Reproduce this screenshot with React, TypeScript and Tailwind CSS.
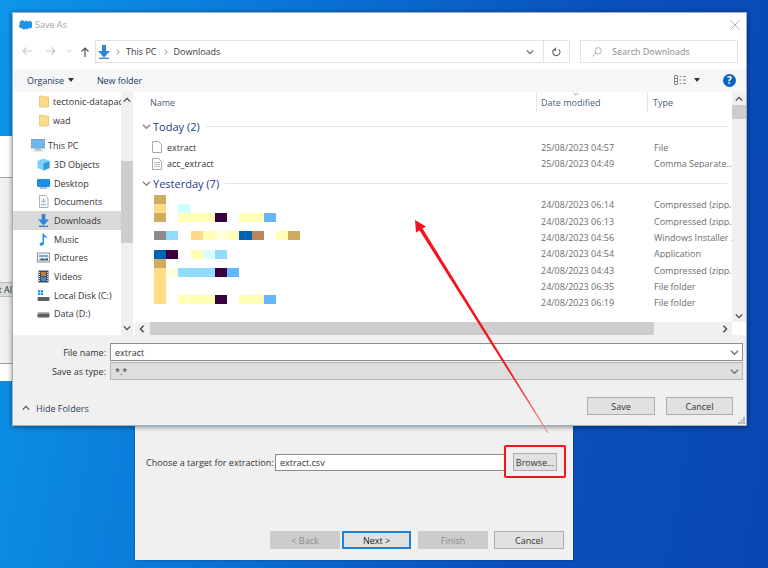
import React from "react";

const ink = "#3a3a3a";

function Chevron({ dir = "down", className = "" }: { dir?: "down" | "up" | "left" | "right"; className?: string }) {
  const d = { down: "M1 3l4 4 4-4", up: "M1 7l4-4 4 4", left: "M7 1L3 5l4 4", right: "M3 1l4 4-4 4" }[dir];
  return (
    <svg viewBox="0 0 10 10" className={className} fill="none" stroke="currentColor" strokeWidth="1.6">
      <path d={d} />
    </svg>
  );
}

function DownArrow({ className = "" }: { className?: string }) {
  return (
    <svg viewBox="0 0 12 14" className={className}>
      <path d="M4 0h4v6h4l-6 6.5L0 6h4z" fill="#2f86d8" />
      <rect x="1" y="12.6" width="10" height="1.2" fill="#1c6fc0" />
    </svg>
  );
}

function NavIcon({ name }: { name: string }) {
  const c = "w-[13px] h-[13px] shrink-0";
  switch (name) {
    case "folder":
      return (
        <svg viewBox="0 0 12 14" className="w-[10px] h-[13px] shrink-0">
          <path d="M0.5 0.5h4l1 1h6v12h-11z" fill="#fbdc8b" stroke="#e5c06a" />
        </svg>
      );
    case "pc":
      return (
        <svg viewBox="0 0 14 13" className="w-[14px] h-[13px] shrink-0">
          <rect x="0.5" y="0.5" width="13" height="8.5" fill="#6cb8ef" stroke="#8aa4b8" />
          <path d="M4 9.5h6v1.5H4z" fill="#a7b4bd" />
          <path d="M2 11.2h10v1.2H2z" fill="#c5ced4" />
        </svg>
      );
    case "cube":
      return (
        <svg viewBox="0 0 13 13" className={c}>
          <path d="M6.5 0.5l6 2.5v7l-6 2.5-6-2.5V3z" fill="#7fd0f5" />
          <path d="M6.5 5.5l6-2.5v7l-6 2.5z" fill="#2b9be0" />
        </svg>
      );
    case "desktop":
      return (
        <svg viewBox="0 0 13 11" className={c}>
          <rect x="0" y="1" width="13" height="8" rx="1" fill="#1e8fe8" />
          <rect x="3" y="9.5" width="7" height="1" fill="#7b8a94" />
        </svg>
      );
    case "docs":
      return (
        <svg viewBox="0 0 11 13" className={c}>
          <path d="M1.5 0.5h6l2.5 2.5v9.5h-8.5z" fill="#f6f8fa" stroke="#a9b2b9" />
          <path d="M5.5 3v4M3.5 5.5l2 2 2-2M3 9.5h5" stroke="#7fb4dc" fill="none" />
        </svg>
      );
    case "down":
      return <DownArrow className="w-[13px] h-[13px] shrink-0" />;
    case "music":
      return (
        <svg viewBox="0 0 10 13" className={c}>
          <path d="M4 0.5h1.3c.3 2 3.5 2.5 3.5 5.5-.8-1.4-2-1.8-3.4-2V10.5c0 1.3-1.3 2.2-2.8 2.2S1 11.8 1.4 10.8C1.8 9.8 3 9.4 4 9.7z" fill="#1a8fe6" />
        </svg>
      );
    case "pics":
      return (
        <svg viewBox="0 0 13 11" className={c}>
          <rect x="0.5" y="1" width="12" height="9" fill="#eef2f5" stroke="#8b97a1" />
          <rect x="2" y="3" width="9" height="2" fill="#7fa8c8" />
          <path d="M2 8l3-2 2 1 4-1v2.5H2z" fill="#4f5f6c" />
        </svg>
      );
    case "vids":
      return (
        <svg viewBox="0 0 11 13" className={c}>
          <rect x="0.5" y="0.5" width="10" height="12" fill="#3f4d66" />
          <rect x="3" y="2" width="5" height="4" fill="#c7803a" />
          <rect x="3" y="7" width="5" height="4" fill="#4a86c0" />
          <path d="M1.5 2v9M9.5 2v9" stroke="#d5dde3" strokeDasharray="1 1" />
        </svg>
      );
    case "c":
      return (
        <svg viewBox="0 0 13 13" className={c}>
          <path d="M1 1h2.2v2.2H1zM3.8 1H6v2.2H3.8zM1 3.8h2.2V6H1zM3.8 3.8H6V6H3.8z" fill="#1f9be8" />
          <rect x="0.5" y="8" width="12" height="4" rx="1" fill="#5c5f63" />
        </svg>
      );
    default:
      return (
        <svg viewBox="0 0 13 13" className={c}>
          <rect x="0.5" y="5" width="12" height="1.5" fill="#b5b9bc" />
          <rect x="0.5" y="6.5" width="12" height="4" rx="1" fill="#5c5f63" />
        </svg>
      );
  }
}

const navTop = [
  { n: "tectonic-datapac", i: "folder" },
  { n: "wad", i: "folder" },
];
const navPc = [
  { n: "3D Objects", i: "cube" },
  { n: "Desktop", i: "desktop" },
  { n: "Documents", i: "docs" },
  { n: "Downloads", i: "down" },
  { n: "Music", i: "music" },
  { n: "Pictures", i: "pics" },
  { n: "Videos", i: "vids" },
  { n: "Local Disk (C:)", i: "c" },
  { n: "Data (D:)", i: "d" },
];

function FileRow({ name, date, type, icon }: { name?: string; date: string; type: string; icon?: "blank" | "csv" }) {
  return (
    <div className="flex h-[16.35px] items-center whitespace-nowrap overflow-hidden">
      <div className="w-[406px] shrink-0 pl-[17px] flex items-center gap-[5px]">
        {icon && (
          <svg viewBox="0 0 10 12" className="w-[10px] h-[12px] shrink-0">
            <path d="M0.5 0.5h6l3 3v8h-9z" fill="#fff" stroke="#a8a8a8" />
            {icon === "csv" && <path d="M2 4.5h6M2 6.5h6M2 8.5h6" stroke="#bdbdbd" />}
          </svg>
        )}
        {name && <span className="text-[#333]">{name}</span>}
      </div>
      <div className="w-[113px] shrink-0 text-[#6d6d6d]">{date}</div>
      <div className="w-[79px] shrink-0 text-[#6d6d6d] overflow-hidden">{type}</div>
    </div>
  );
}

function GroupHeader({ label }: { label: string }) {
  return (
    <div className="flex h-[18px] items-center pl-[7px] pr-[5px]">
      <Chevron className="w-[9px] h-[9px] text-[#8a8a8a] shrink-0" />
      <span className="ml-[2px] text-[11px] text-[#1e3a8a] whitespace-nowrap">{label}</span>
      <div className="ml-[6px] h-px bg-[#e2e5ea] flex-1" />
    </div>
  );
}

const T = "bg-[#d0ab62]", Y = "bg-[#fedd85]", L = "bg-[#ffffb6]", D = "bg-[#3a0040]", B = "bg-[#66b6ff]", S = "bg-[#90dbff]";
const C = "bg-[#ccffff]", P = "bg-[#ffffdb]", N = "bg-[#0063b1]", R = "bg-[#b8865a]", G = "bg-[#8f8a90]", O = "bg-[#fdd98c]", Q = "bg-[#dbffff]";
const _ = "";
const mosaic: string[][] = [
  [T],
  [Y, _, C],
  [T, _, L, L, L, D, _, L, L, B],
  [_],
  [G, S, _, O, L, P, L, N, R, _, L, T],
  [_],
  [N, D, _, L, Q, S],
  [T],
  [Y, P, S, S, S, D, B],
  [Y],
  [Y],
  [Y, _, L, L, L, D, _, L, L, B],
];

function Btn({ children, className = "", tone = "normal" }: { children: React.ReactNode; className?: string; tone?: "normal" | "off" | "focus" }) {
  const look = {
    normal: "border border-[#adadad] bg-[#e1e1e1] text-[#333]",
    off: "border border-[#cccccc] bg-[#cccccc] text-[#8a8a8a]",
    focus: "border-2 border-[#1d7fd6] bg-[#e1e1e1] text-[#222]",
  }[tone];
  return <div className={`h-[18px] flex items-center justify-center ${look} ${className}`}>{children}</div>;
}

export default function App() {
  return (
    <div
      className="relative w-[768px] h-[568px] overflow-hidden bg-[linear-gradient(100deg,#0c96ea_0%,#0a78d8_30%,#0a50bc_70%,#0847b4_100%)] text-[9px] leading-none"
      style={{ fontFamily: '"Open Sans", "Noto Sans", sans-serif', color: ink }}
    >
      {/* Window behind on the left */}
      <div className="absolute left-0 top-[136px] w-[12px] h-[245px] bg-[#f0f0f0] flex flex-col overflow-hidden">
        <div className="h-[42px] bg-white border-b border-[#a0a0a0] shrink-0" />
        <div className="h-[104px] shrink-0" />
        <div className="h-[15px] bg-[#dcdcdc] border-y border-[#bbb] shrink-0 flex items-center justify-end text-[#333] whitespace-nowrap">t Al</div>
        <div className="h-[66px] shrink-0" />
        <div className="flex-1 bg-white border-t border-[#a0a0a0]" />
      </div>

      {/* Wizard window behind */}
      <div className="absolute left-[135px] top-[400px] w-[438px] h-[160px] bg-[#f0f0f0] shadow-[0_0_2px_rgba(0,0,0,0.4)] flex flex-col pt-[53px] px-[11px] text-[#333]">
        <div className="flex items-center h-[18px]">
          <span className="w-[129px] shrink-0 whitespace-nowrap">Choose a target for extraction:</span>
          <div className="w-[230px] h-[17px] border border-[#8a8a8a] bg-white flex items-center pl-[4px]">extract.csv</div>
          <Btn className="ml-[8px] w-[44px]">Browse...</Btn>
        </div>
        <div className="mt-[60px] flex justify-end">
          <Btn tone="off" className="w-[70px]">&lt; Back</Btn>
          <Btn tone="focus" className="ml-[2px] w-[69px]">Next &gt;</Btn>
          <Btn tone="off" className="ml-[7px] w-[70px]">Finish</Btn>
          <Btn className="ml-[6px] w-[70px] -mr-[2px]">Cancel</Btn>
        </div>
      </div>

      {/* Save As dialog */}
      <div className="absolute left-[12px] top-[12px] w-[735px] h-[414px] bg-white border border-[#9fb0bf] shadow-[0_1px_5px_rgba(0,0,0,0.45)] flex flex-col">
        {/* Title */}
        <div className="h-[25px] shrink-0 flex items-center pl-[6px] pr-[5px] pb-[2px]">
          <svg viewBox="0 0 14 10" className="w-[13px] h-[10px]">
            <path d="M5.8 1.5A2.5 2.5 0 0 1 9.6 1.2 2.9 2.9 0 0 1 13.9 4.8 2.6 2.6 0 0 1 10.3 8.3 2.2 2.2 0 0 1 7 9 2.5 2.5 0 0 1 3 8.5 2.4 2.4 0 0 1 1 4.2 2.7 2.7 0 0 1 5.8 1.5Z" fill="#1b96e8" />
          </svg>
          <span className="ml-[3px] text-[#a5a5a5]">Save As</span>
          <svg viewBox="0 0 10 10" className="ml-auto w-[10px] h-[10px] mr-[1px]" stroke="#a8a8a8" fill="none" strokeWidth="0.9">
            <path d="M0.5 0.5l9 9M9.5 0.5l-9 9" />
          </svg>
        </div>

        {/* Address row */}
        <div className="h-[31px] shrink-0 flex items-start pt-[2px] pl-[9px]">
          <svg viewBox="0 0 10 10" className="w-[10px] h-[10px] mt-[6px] text-[#c8c8c8]" fill="none" stroke="currentColor" strokeWidth="1.1">
            <path d="M10 5H1M4.5 1.5L1 5l3.5 3.5" />
          </svg>
          <svg viewBox="0 0 10 10" className="w-[10px] h-[10px] mt-[6px] ml-[14px] text-[#c8c8c8]" fill="none" stroke="currentColor" strokeWidth="1.1">
            <path d="M0 5h9M5.5 1.5L9 5 5.5 8.5" />
          </svg>
          <Chevron className="w-[6px] h-[6px] mt-[8px] ml-[10px] text-[#c8c8c8]" />
          <svg viewBox="0 0 10 10" className="w-[10px] h-[10px] mt-[7px] ml-[8px] text-[#555]" fill="none" stroke="currentColor" strokeWidth="1.2">
            <path d="M5 10V1M1.5 4.5L5 1l3.5 3.5" />
          </svg>
          <div className="ml-[5px] w-[475px] h-[23px] border-[1.5px] border-[#e3e3e3] flex items-center">
            <DownArrow className="ml-[2px] w-[12px] h-[14px]" />
            <Chevron dir="right" className="ml-[5px] w-[6px] h-[6px] text-[#888]" />
            <span className="ml-[5px]">This PC</span>
            <Chevron dir="right" className="ml-[7px] w-[6px] h-[6px] text-[#888]" />
            <span className="ml-[4px]">Downloads</span>
            <Chevron className="ml-auto mr-[9px] w-[8px] h-[8px] text-[#666]" />
            <div className="w-px h-full bg-[#e3e3e3]" />
            <svg viewBox="0 0 10 10" className="mx-[8px] w-[9px] h-[10px] text-[#666]" fill="none" stroke="currentColor" strokeWidth="1.2">
              <path d="M3 1.5A4 4 0 1 0 7.5 2M4 0v3H1" />
            </svg>
          </div>
          <div className="ml-[10px] w-[158px] h-[23px] border-[1.5px] border-[#e3e3e3] flex items-center pl-[11px] text-[#8a8a8a]">
            <svg viewBox="0 0 10 10" className="w-[10px] h-[10px]" fill="none" stroke="#a8a8a8" strokeWidth="0.9">
              <circle cx="6.2" cy="3.8" r="3.2" />
              <path d="M3.8 6L0.5 9.5" />
            </svg>
            <span className="ml-[10px]">Search Downloads</span>
          </div>
        </div>

        {/* Toolbar */}
        <div className="h-[23px] shrink-0 bg-[#f5f6f7] flex items-center pl-[14px] pr-[10px] pb-[1px] text-[#1f3a5a]">
          <span className="tracking-[-0.1px]">Organise</span>
          <svg viewBox="0 0 6 4" className="ml-[4px] w-[6px] h-[4px]"><path d="M0 0h6L3 4z" fill="#333" /></svg>
          <span className="ml-[23px] tracking-[-0.1px]">New folder</span>
          <svg viewBox="0 0 13 10" className="ml-auto w-[13px] h-[10px]" stroke="#8a8a8a" fill="none" strokeWidth="1">
            <path d="M0.5 0.5h3v9h-3zM0.5 3.5h3M0.5 6.5h3M5.5 1.5h2M9 1.5h3M5.5 5h2M9 5h3M5.5 8.5h2M9 8.5h3" />
          </svg>
          <svg viewBox="0 0 6 4" className="ml-[7px] w-[6px] h-[4px]"><path d="M0 0h6L3 4z" fill="#333" /></svg>
          <div className="ml-[23px] w-[13px] h-[13px] rounded-full bg-[#0a63c0] text-white font-bold text-[10px] flex items-center justify-center">?</div>
        </div>

        {/* Body */}
        <div className="h-[243px] shrink-0 flex">
          {/* Navigation */}
          <div className="w-[108px] shrink-0 overflow-hidden whitespace-nowrap">
            {navTop.map((n) => (
              <div key={n.n} className="h-[18.7px] flex items-center pl-[26px] gap-[4px]">
                <NavIcon name={n.i} />
                <span className="text-[#333]">{n.n}</span>
              </div>
            ))}
            <div className="h-[7px]" />
            <div className="h-[18.7px] flex items-center pl-[18px] gap-[3px]">
              <NavIcon name="pc" />
              <span>This PC</span>
            </div>
            {navPc.map((n) => (
              <div key={n.n} className={`h-[18.7px] flex items-center pl-[24px] gap-[4px] ${n.n === "Downloads" ? "bg-[#d9d9d9]" : ""}`}>
                <NavIcon name={n.i} />
                <span className="text-[#333]">{n.n}</span>
              </div>
            ))}
          </div>
          <div className="w-[12px] shrink-0 bg-[#f0f0f0] flex flex-col items-center pt-[4px] pb-[3px]">
            <Chevron dir="up" className="w-[8px] h-[8px] text-[#444] shrink-0" />
            <div className="mt-[57px] w-full h-[82px] bg-[#cdcdcd]" />
            <Chevron className="mt-auto w-[8px] h-[8px] text-[#444] shrink-0" />
          </div>

          {/* Files */}
          <div className="ml-[2px] flex-1 flex flex-col min-w-0">
            <div className="flex-1 flex min-h-0">
              <div className="relative flex-1 min-w-0 overflow-hidden">
                <div className="h-[20px] flex items-center text-[#4c607a] relative">
                  <span className="w-[402px] pl-[15px] shrink-0 border-r border-[#e5e5e5] h-full flex items-center">Name</span>
                  <span className="w-[111px] pl-[4px] shrink-0 border-r border-[#e5e5e5] h-full flex items-center">Date modified</span>
                  <span className="pl-[5px]">Type</span>
                  <Chevron className="absolute left-[438px] -top-[1px] w-[6px] h-[6px] text-[#999]" />
                </div>
                <div className="pt-[5px]">
                  <GroupHeader label="Today (2)" />
                  <div className="h-[4px]" />
                  <FileRow name="extract" date="25/08/2023 04:57" type="File" icon="blank" />
                  <FileRow name="acc_extract" date="25/08/2023 04:49" type="Comma Separate..." icon="csv" />
                  <div className="h-[3px]" />
                  <GroupHeader label="Yesterday (7)" />
                  <div className="h-[4px]" />
                  <FileRow date="24/08/2023 06:14" type="Compressed (zipp..." />
                  <FileRow date="24/08/2023 06:13" type="Compressed (zipp..." />
                  <FileRow date="24/08/2023 04:56" type="Windows Installer ..." />
                  <FileRow date="24/08/2023 04:54" type="Application" />
                  <FileRow date="24/08/2023 04:43" type="Compressed (zipp..." />
                  <FileRow date="24/08/2023 06:35" type="File folder" />
                  <FileRow date="24/08/2023 06:19" type="File folder" />
                </div>
                {/* Redaction mosaic over the names */}
                <div className="absolute left-[19px] top-[103px] grid grid-cols-[repeat(12,12.2px)] auto-rows-[9.1px]">
                  {mosaic.flatMap((row, r) =>
                    Array.from({ length: 12 }, (_x, c) => <div key={`${r}-${c}`} className={row[c] || ""} />)
                  )}
                </div>
              </div>
              <div className="w-[14px] shrink-0 bg-[#f0f0f0] flex flex-col items-center pt-[3px] pb-[2px]">
                <Chevron dir="up" className="w-[8px] h-[8px] text-[#444] shrink-0" />
                <div className="mt-[2px] w-full h-[14px] bg-[#cdcdcd]" />
                <Chevron className="mt-auto w-[8px] h-[8px] text-[#444] shrink-0" />
              </div>
            </div>
            <div className="h-[13px] shrink-0 flex">
              <div className="flex-1 bg-[#f0f0f0] flex items-center">
                <Chevron dir="left" className="ml-[3px] w-[8px] h-[8px] text-[#444] shrink-0" />
                <div className="ml-[4px] w-[504px] h-full bg-[#cdcdcd]" />
                <Chevron dir="right" className="ml-auto mr-[3px] w-[8px] h-[8px] text-[#444] shrink-0" />
              </div>
              <div className="w-[14px] bg-white" />
            </div>
          </div>
        </div>

        {/* Bottom panel */}
        <div className="flex-1 bg-[#f0f0f0] relative text-[#333] flex flex-col pt-[8px] pl-[4px] pr-[3px]">
          <div className="flex items-center h-[18px]">
            <span className="w-[89px] text-right shrink-0">File name:</span>
            <div className="ml-[4px] flex-1 h-[18px] border border-[#8f8f8f] bg-white flex items-center pl-[4px] pr-[3px]">
              extract
              <Chevron className="ml-auto w-[9px] h-[9px] text-[#777]" />
            </div>
          </div>
          <div className="flex items-center h-[18px] mt-[1px]">
            <span className="w-[89px] text-right shrink-0">Save as type:</span>
            <div className="ml-[4px] flex-1 h-[18px] border border-[#b5b5b5] bg-[#dedede] flex items-center pl-[4px] pr-[3px]">
              *.*
              <Chevron className="ml-auto w-[9px] h-[9px] text-[#777]" />
            </div>
          </div>
          <div className="mt-[17px] flex items-start">
            <div className="h-[18px] mt-[2px] flex items-center">
              <Chevron dir="up" className="ml-[5px] w-[8px] h-[8px] text-[#555]" />
              <span className="ml-[6px] text-[#2f3f55]">Hide Folders</span>
            </div>
            <Btn className="ml-auto w-[68px]">Save</Btn>
            <Btn className="ml-[11px] w-[67px] mr-[10px]">Cancel</Btn>
          </div>
          <svg viewBox="0 0 7 7" className="absolute right-[1px] bottom-[1px] w-[7px] h-[7px]" fill="#b0b0b0">
            <path d="M5 0h2v2H5zM2.5 2.5h2v2h-2zM5 2.5h2v2H5zM0 5h2v2H0zM2.5 5h2v2h-2zM5 5h2v2H5z" />
          </svg>
        </div>
      </div>

      {/* Annotation: red highlight box */}
      <div className="absolute left-[504px] top-[445px] w-[62px] h-[33px] border-[2.5px] border-[#f5141c] rounded-[2px]" />

      {/* Annotation: red arrow */}
      <svg className="absolute inset-0 w-[768px] h-[568px] pointer-events-none" viewBox="0 0 768 568">
        <defs>
          <linearGradient id="tail" gradientUnits="userSpaceOnUse" x1="415" y1="220" x2="548" y2="433">
            <stop offset="0.7" stopColor="#f5141c" />
            <stop offset="1" stopColor="#f09090" />
          </linearGradient>
        </defs>
        <path d="M415 220L426 226.5 422.6 228.6 548.5 432.7 547.6 433.2 419.6 230.4 416 232.5Z" fill="url(#tail)" />
      </svg>
    </div>
  );
}
